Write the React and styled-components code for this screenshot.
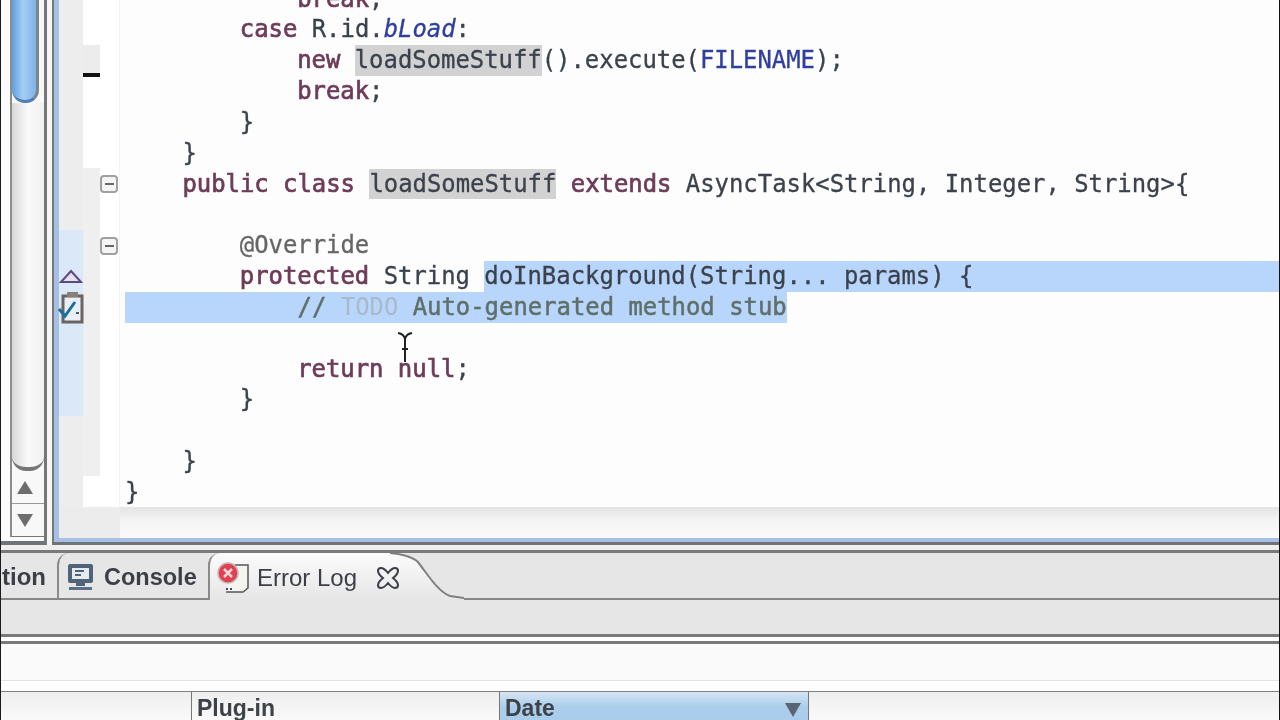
import React from "react";
import styled, { createGlobalStyle } from "styled-components";

const Global = createGlobalStyle`
  html, body {
    margin: 0;
    padding: 0;
    width: 1280px;
    height: 720px;
    overflow: hidden;
    background: #e6e6e6;
  }
`;

const Page = styled.div`
  width: 1280px;
  height: 720px;
  box-sizing: border-box;
  display: flex;
  flex-direction: column;
  overflow: hidden;
  background: #eeeeee;
  border-left: 1px solid #1a1a1a;
  border-right: 1px solid #111;
  font-family: "Liberation Sans", Arial, sans-serif;
  filter: blur(0.45px);
`;

const Workspace = styled.div`
  height: 545px;
  flex: none;
  display: flex;
  background: #f6f6f6;
`;

const ScrollWrap = styled.div`
  width: 46px;
  flex: none;
  box-sizing: border-box;
  margin-right: 5px;
  padding: 0 0 4px 9px;
  display: flex;
  background: #fbfbfb;
  border-right: 3px solid #777;
  border-bottom: 4px solid #6f7378;
`;

const ScrollColumn = styled.div`
  flex: 1;
  display: flex;
  flex-direction: column;
  background: #f8f8f8;
  border-left: 2px solid #8c8c8c;
  border-bottom: 1px solid #777;
`;

const Thumb = styled.div`
  height: 100px;
  flex: none;
  margin-right: 5px;
  background: linear-gradient(90deg, #5d9fe0, #a5cdf3 45%, #7db4ea);
  border-right: 3px solid #808488;
  border-radius: 0 0 13px 13px;
  border-bottom: 3px solid #4f80b4;
`;

const Track = styled.div`
  flex: 1;
  background: linear-gradient(90deg, #d8d8d8, #fafafa 50%, #f0f0f0);
  border-radius: 0 0 14px 14px;
  border-bottom: 4px solid #777;
`;

const Arrows = styled.div`
  height: 65px;
  flex: none;
  display: flex;
  flex-direction: column;
`;

const ArrowCell = styled.div`
  flex: 1;
  display: flex;
  align-items: center;
  justify-content: center;
  padding-right: 7px;
  border-top: ${(p) => (p.$down ? "1px solid #999" : "none")};
`;

const Arrow = styled.div`
  width: 0;
  height: 0;
  border-left: 8px solid transparent;
  border-right: 8px solid transparent;
  ${(p) => (p.$down ? "border-top: 13px solid #6d6d6d;" : "border-bottom: 13px solid #6d6d6d;")}
`;

const EditorFrame = styled.div`
  flex: 1;
  min-width: 0;
  border-left: 2px solid #777;
  border-bottom: 3px solid #6f7378;
`;

const EditorInner = styled.div`
  height: 100%;
  box-sizing: border-box;
  display: flex;
  flex-direction: column;
  border-left: 5px solid #a6bfe4;
  border-bottom: 4px solid #a6bfe4;
`;

const EditorBody = styled.div`
  height: 507px;
  flex: none;
  display: flex;
`;

const Ruler = styled.div`
  width: 24px;
  flex: none;
  position: relative;
  display: flex;
  flex-direction: column;
  background: #ededed;
`;

const Band = styled.div`
  height: ${(p) => p.$h}px;
  flex: none;
  background: ${(p) => p.$c};
`;

const DashBand = styled(Band)`
  box-sizing: border-box;
  border-bottom: 4px solid #111;
`;

const TaskIcon = styled.svg`
  position: absolute;
  left: -2px;
  top: 268px;
`;

const AnnotationColumn = styled.div`
  width: 17px;
  flex: none;
  display: flex;
  flex-direction: column;
  background: #fff;
`;

const FoldColumn = styled.div`
  width: 20px;
  flex: none;
  display: flex;
  flex-direction: column;
  box-sizing: border-box;
  background: #fff;
  border-right: 1px solid #f3f3f3;
`;

const FoldSpace = styled.div`
  height: ${(p) => p.$h}px;
  flex: none;
`;

const Minus = styled.div`
  width: 18px;
  height: 18px;
  flex: none;
  box-sizing: border-box;
  border: 2px solid #a0a0a0;
  border-radius: 4px;
  background: #f4f4f4;
  display: flex;
  align-items: center;
  justify-content: center;

  &::before {
    content: "";
    width: 9px;
    height: 2px;
    background: #666;
  }
`;

const Code = styled.div`
  flex: 1;
  min-width: 0;
  position: relative;
  overflow: hidden;
  background: #fdfdfd;
  padding-left: 5px;
  font-family: "DejaVu Sans Mono", monospace;
  font-size: 23.9px;
  color: #3b424c;
  -webkit-text-stroke: 0.3px currentColor;
`;

const Line = styled.div`
  height: 30.85px;
  line-height: 30.85px;
  white-space: pre;
  padding-left: ${(p) => (p.$indent || 0) * 57.4}px;

  &:first-child {
    margin-top: -16.5px;
  }
`;

const Kw = styled.span`
  color: #6d3c59;
  -webkit-text-stroke: 0.7px currentColor;
`;

const Field = styled.span`
  color: #2f3f9c;
  font-style: ${(p) => (p.$italic ? "italic" : "normal")};
`;

const Mark = styled.span`
  display: inline-block;
  height: 30.85px;
  background: #d2d2d2;
`;

const Sel = styled.span`
  display: inline-block;
  height: 30.85px;
  width: ${(p) => p.$w};
  background: #b8d5fb;
`;

const Comment = styled.span`
  color: #5f6f6a;
  -webkit-text-stroke: 0.5px currentColor;
`;

const Todo = styled.span`
  color: #a9b9ca;
  -webkit-text-stroke: 0;
`;

const Anno = styled.span`
  color: #666;
`;

const Cursor = styled.svg`
  position: absolute;
  left: 276px;
  top: 331px;
`;

const EditorFoot = styled.div`
  flex: 1;
  display: flex;
  background: linear-gradient(#e4e4e4, #f4f4f4 45%, #fdf9fc);
`;

const FootLeft = styled.div`
  width: 61px;
  flex: none;
  background: #ececec;
`;

const TabBar = styled.div`
  height: 50px;
  flex: none;
  box-sizing: border-box;
  margin-top: 5px;
  display: flex;
  background: #e6e6e6;
  border-top: 3px solid #7a7a7a;
  border-bottom: 2px solid #858585;
`;

const Tab = styled.div`
  flex: none;
  display: flex;
  align-items: center;
  box-sizing: border-box;
  height: 100%;
  padding-top: 3px;
  font-size: 24px;
  color: #3c4046;
`;

const TabPrev = styled(Tab)`
  width: 56px;
  justify-content: flex-end;
  padding-right: 11px;
  font-weight: bold;
  overflow: hidden;
`;

const TabConsole = styled(Tab)`
  width: 151px;
  gap: 10px;
  padding-left: 8px;
  font-size: 23.5px;
  font-weight: bold;
  border-left: 2px solid #8a8a8a;
  border-top-left-radius: 12px;
`;

const TabActive = styled(Tab)`
  width: 182px;
  height: calc(100% + 2px);
  position: relative;
  z-index: 0;
  padding-left: 7px;
  background: linear-gradient(#fbfbfb, #e6e6e6);
  border-left: 2px solid #8a8a8a;
  border-top-left-radius: 12px;
`;

const TabIcon = styled.svg`
  flex: none;
`;

const TabLabel = styled.span`
  flex: none;
  margin-left: 8px;
  white-space: nowrap;
`;

const CloseIcon = styled.svg`
  margin-left: 19px;
  flex: none;
`;

const Curve = styled.svg`
  position: absolute;
  left: 180px;
  top: 0;
  z-index: -1;
`;

const Toolbar = styled.div`
  height: 34px;
  flex: none;
  background: #e6e6e6;
  border-bottom: 3px solid #7a7a7a;
`;

const WhiteGap = styled.div`
  height: 4px;
  flex: none;
  background: #fff;
`;

const Strip = styled.div`
  height: 36px;
  flex: none;
  background: #fafafa;
  border-top: 3px solid #7a7a7a;
  border-bottom: 1px solid #e2e2e2;
`;

const FilterGap = styled.div`
  height: 10px;
  flex: none;
  background: #fdfdfd;
`;

const Headers = styled.div`
  flex: 1;
  display: flex;
  border-top: 1px solid #808080;
  background: linear-gradient(#eeeeee, #fafafa);
  font-size: 23px;
  font-weight: bold;
  color: #3d4248;
`;

const Head = styled.div`
  width: ${(p) => (p.$w ? `${p.$w}px` : "auto")};
  flex: ${(p) => (p.$w ? "none" : 1)};
  box-sizing: border-box;
  display: flex;
  justify-content: space-between;
  padding: 3px 0 0 5px;
  border-right: ${(p) => (p.$last ? "none" : "1px solid #777")};
  background: ${(p) => (p.$sorted ? "linear-gradient(#d6e6f4, #a9cdea 50%)" : "transparent")};
`;

const SortArrow = styled.div`
  width: 0;
  height: 0;
  margin: 8px 7px 0 0;
  border-left: 8px solid transparent;
  border-right: 8px solid transparent;
  border-top: 14px solid #5a6472;
`;

function App() {
  return (
    <Page>
      <Global />
      <Workspace>
        <ScrollWrap>
          <ScrollColumn>
            <Thumb />
            <Track />
            <Arrows>
              <ArrowCell><Arrow /></ArrowCell>
              <ArrowCell $down><Arrow $down /></ArrowCell>
            </Arrows>
          </ScrollColumn>
        </ScrollWrap>
        <EditorFrame>
          <EditorInner>
            <EditorBody>
              <Ruler>
                <Band $h={230} $c="#ededed" />
                <Band $h={186} $c="#dbe8f8" />
                <TaskIcon width="28" height="58" viewBox="0 0 28 58">
                  <path d="M14 3 L24 14 H4 Z" fill="#e6e0f0" stroke="#5b4a80" strokeWidth="2" />
                  <path d="M6 28h19v26H6z" fill="#e8eff6" stroke="#6a6460" strokeWidth="3" />
                  <path d="M10 24h11v5H10z" fill="#8a8078" />
                  <path d="M2 41l6 7 10-14" fill="none" stroke="#1f6f9c" strokeWidth="3" />
                  <path d="M19 45h3" stroke="#555" strokeWidth="2" />
                </TaskIcon>
              </Ruler>
              <AnnotationColumn>
                <Band $h={45} $c="#fff" />
                <DashBand $h={32} $c="#ececec" />
                <Band $h={91} $c="#fff" />
                <Band $h={308} $c="#efefef" />
              </AnnotationColumn>
              <FoldColumn>
                <FoldSpace $h={175} />
                <Minus />
                <FoldSpace $h={44} />
                <Minus />
              </FoldColumn>
              <Code>
                <Line $indent={3}><Kw>break</Kw>;</Line>
                <Line $indent={2}><Kw>case</Kw> R.id.<Field $italic>bLoad</Field>:</Line>
                <Line $indent={3}><Kw>new</Kw> <Mark>loadSomeStuff</Mark>().execute(<Field>FILENAME</Field>);</Line>
                <Line $indent={3}><Kw>break</Kw>;</Line>
                <Line $indent={2}>{"}"}</Line>
                <Line $indent={1}>{"}"}</Line>
                <Line $indent={1}><Kw>public class</Kw> <Mark>loadSomeStuff</Mark> <Kw>extends</Kw> AsyncTask&lt;String, Integer, String&gt;{"{"}</Line>
                <Line />
                <Line $indent={2}><Anno>@Override</Anno></Line>
                <Line $indent={2}><Kw>protected</Kw> String <Sel $w="796px">doInBackground(String... params) {"{"}</Sel></Line>
                <Line><Sel $w="662px"><Comment>{"            // "}<Todo>TODO</Todo> Auto-generated method stub</Comment></Sel></Line>
                <Line />
                <Line $indent={3}><Kw>return null</Kw>;</Line>
                <Line $indent={2}>{"}"}</Line>
                <Line />
                <Line $indent={1}>{"}"}</Line>
                <Line>{"}"}</Line>
                <Cursor width="20" height="34" viewBox="0 0 20 34">
                  <path d="M2 2 Q8 3 9 8 L9 31 M16 2 Q10 3 9 8" fill="none" stroke="#222" strokeWidth="2" />
                  <path d="M6 18h6" stroke="#222" strokeWidth="2" />
                </Cursor>
              </Code>
            </EditorBody>
            <EditorFoot>
              <FootLeft />
            </EditorFoot>
          </EditorInner>
        </EditorFrame>
      </Workspace>
      <TabBar>
        <TabPrev>tion</TabPrev>
        <TabConsole>
          <TabIcon width="27" height="28" viewBox="0 0 27 28">
            <rect x="1" y="1" width="25" height="19" rx="2" fill="#4f6479" />
            <rect x="5" y="5" width="17" height="11" fill="#e6eaee" />
            <path d="M8 8h9M8 12h6" stroke="#4f6479" strokeWidth="2" />
            <rect x="9" y="20" width="9" height="3" fill="#4f6479" />
            <rect x="2" y="24" width="23" height="3" fill="#5c7085" />
          </TabIcon>
          Console
        </TabConsole>
        <TabActive>
          <TabIcon width="32" height="32" viewBox="0 0 32 32">
            <path d="M18 3h13v23l-5 4H9" fill="#f4f4f0" stroke="#555" strokeWidth="1.5" />
            <circle cx="11" cy="11" r="10" fill="#e2404f" stroke="#c4b4b4" strokeWidth="1.5" />
            <path d="M7 7l8 8M15 7l-8 8" stroke="#f6d6d6" strokeWidth="2.5" />
            <path d="M9 27h2M13 27h2" stroke="#446" strokeWidth="2" />
          </TabIcon>
          <TabLabel>Error Log</TabLabel>
          <CloseIcon width="24" height="24" viewBox="0 0 24 24">
            <path d="M2 5 Q2 2 5 2 Q8 2 12 7 Q16 2 19 2 Q22 2 22 5 Q22 8 17 12 Q22 16 22 19 Q22 22 19 22 Q16 22 12 17 Q8 22 5 22 Q2 22 2 19 Q2 16 7 12 Q2 8 2 5Z" fill="none" stroke="#3b3f45" strokeWidth="2" />
          </CloseIcon>
          <Curve width="74" height="47" viewBox="0 0 74 47">
            <defs>
              <linearGradient id="tabFill" x1="0" y1="0" x2="0" y2="1">
                <stop offset="0" stopColor="#fbfbfb" />
                <stop offset="1" stopColor="#e6e6e6" />
              </linearGradient>
            </defs>
            <path d="M0 0 C12 1 20 3 27 8 C37 20 47 38 60 43 L74 45 V47 H0 Z" fill="url(#tabFill)" />
            <path d="M0 0 C12 1 20 3 27 8 C37 20 47 38 60 43 L74 45" fill="none" stroke="#808080" strokeWidth="2" />
          </Curve>
        </TabActive>
      </TabBar>
      <Toolbar />
      <WhiteGap />
      <Strip />
      <FilterGap />
      <Headers>
        <Head $w={191} />
        <Head $w={308}>Plug-in</Head>
        <Head $w={309} $sorted>Date<SortArrow /></Head>
        <Head $last />
      </Headers>
    </Page>
  );
}

export default App;
